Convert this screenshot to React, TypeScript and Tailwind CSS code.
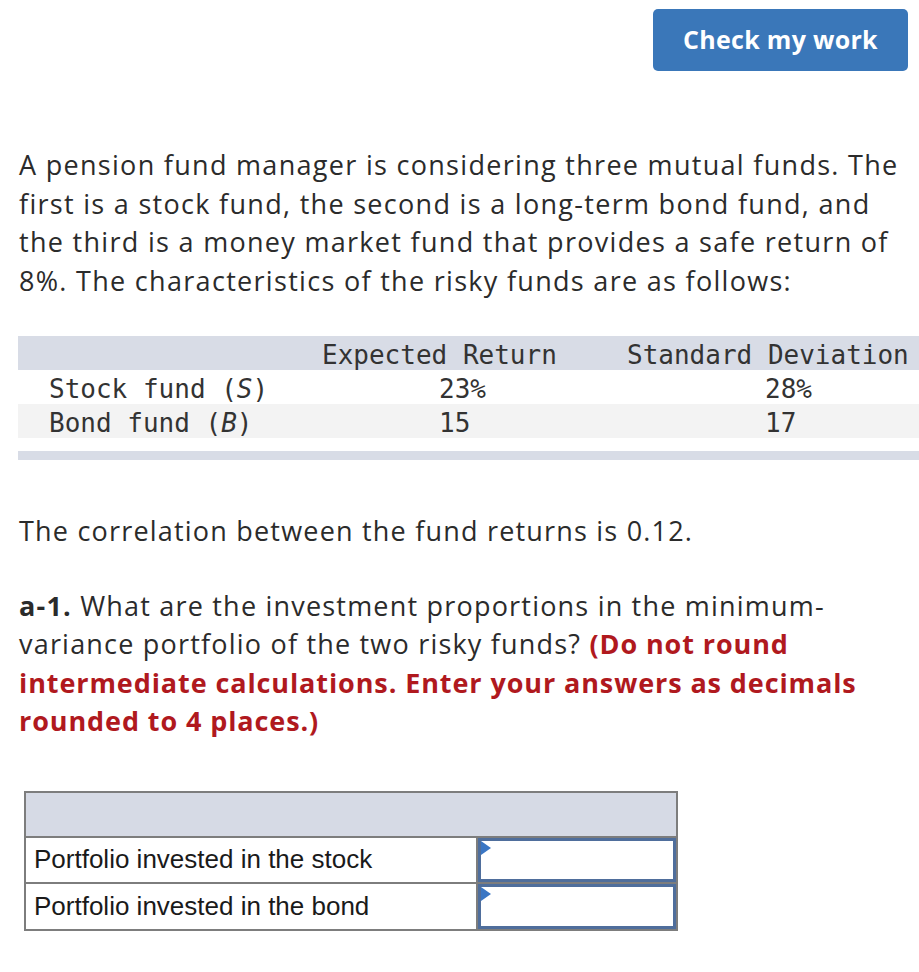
import React from "react";

const sans = { fontFamily: "'Open Sans', 'Lato', sans-serif" };
const mono = { fontFamily: "'DejaVu Sans Mono', monospace" };
const arial = { fontFamily: "'Liberation Sans', Arial, sans-serif" };

function InputCell() {
  return (
    <div className="relative h-full border-[3px] border-[#4f6e9c] bg-white">
      <svg className="absolute left-0 top-0" width="10" height="14" viewBox="0 0 10 14">
        <polygon points="0,0 10,7 0,14" fill="#3a76c4" />
      </svg>
    </div>
  );
}

export default function App() {
  return (
    <div className="w-[919px] min-h-[972px] bg-white text-[#2b2b2b] overflow-hidden" style={sans}>
      <div className="flex justify-end pt-[9px] pr-[11px]">
        <button className="w-[255px] h-[62px] rounded-[5px] bg-[#3a77b9] text-white text-[25px] font-bold tracking-[0.3px]">
          Check my work
        </button>
      </div>

      <p className="mt-[75px] pl-[19px] text-[27px] leading-[38.5px] tracking-[1.3px] whitespace-nowrap">
        A pension fund manager is considering three mutual funds. The
        <br />
        first is a stock fund, the second is a long-term bond fund, and
        <br />
        the third is a money market fund that provides a safe return of
        <br />
        8%. The characteristics of the risky funds are as follows:
      </p>

      <div className="mt-[36px] ml-[18px] text-[26px] text-[#333]" style={mono}>
        <div className="grid grid-cols-[304px_305px_292px] h-[34px] bg-[#d8dce6] items-center">
          <div></div>
          <div>Expected Return</div>
          <div>Standard Deviation</div>
        </div>
        <div className="grid grid-cols-[421px_326px_154px] h-[34px] items-center">
          <div className="pl-[31px]">Stock fund (<i>S</i>)</div>
          <div>23%</div>
          <div>28%</div>
        </div>
        <div className="grid grid-cols-[421px_326px_154px] h-[34px] bg-[#f3f3f3] items-center">
          <div className="pl-[31px]">Bond fund (<i>B</i>)</div>
          <div>15</div>
          <div>17</div>
        </div>
        <div className="mt-[13px] h-[9px] bg-[#d8dce6]"></div>
      </div>

      <p className="mt-[52px] pl-[19px] text-[27px] leading-[38.5px] tracking-[1.2px] whitespace-nowrap">
        The correlation between the fund returns is 0.12.
      </p>

      <p className="mt-[36px] pl-[19px] text-[27px] leading-[38.5px] tracking-[1.2px] whitespace-nowrap">
        <b>a-1.</b> What are the investment proportions in the minimum-
        <br />
        variance portfolio of the two risky funds?{" "}
        <b className="text-[#b0191e] tracking-[0.9px]">
          (Do not round
          <br />
          intermediate calculations. Enter your answers as decimals
          <br />
          rounded to 4 places.)
        </b>
      </p>

      <div className="mt-[50px] ml-[24px] w-[654px] border-2 border-[#7d7d7d] text-[26px] text-[#1a1a1a]" style={arial}>
        <div className="h-[45px] bg-[#d6dae5] border-b-2 border-[#7d7d7d]"></div>
        <div className="grid grid-cols-[452px_1fr] h-[46px] border-b-2 border-[#7d7d7d]">
          <div className="flex items-center pl-[8px] border-r-2 border-[#7d7d7d]">Portfolio invested in the stock</div>
          <InputCell />
        </div>
        <div className="grid grid-cols-[452px_1fr] h-[45px]">
          <div className="flex items-center pl-[8px] border-r-2 border-[#7d7d7d]">Portfolio invested in the bond</div>
          <InputCell />
        </div>
      </div>
    </div>
  );
}
